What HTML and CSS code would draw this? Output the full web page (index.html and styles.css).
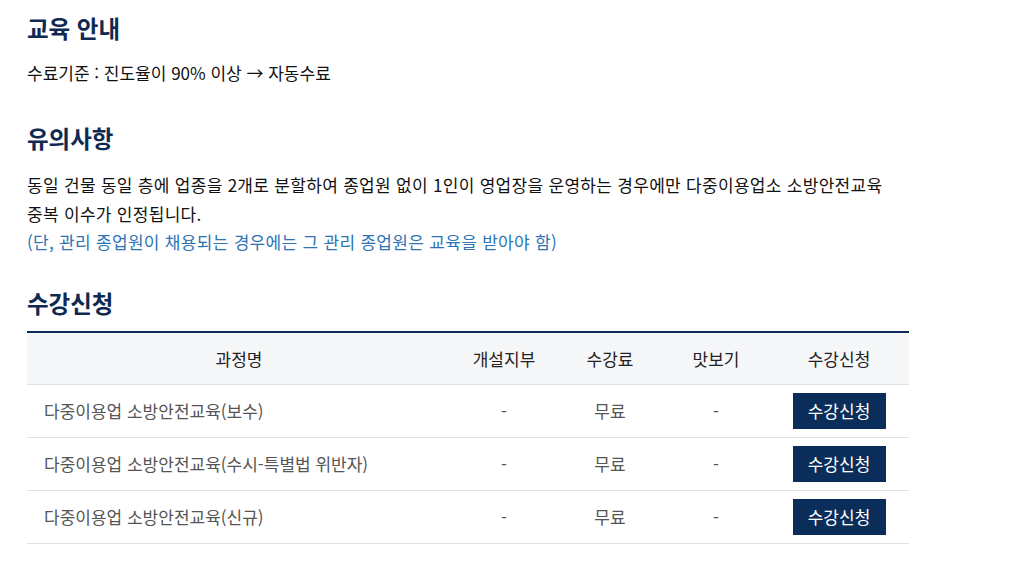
FILE: index.html
```html
<!DOCTYPE html>
<html lang="ko">
<head>
    <meta charset="UTF-8">
    <title>교육 안내</title>
    <link rel="stylesheet" href="styles.css">
</head>
<body>
    <div class="container">
        <h2 class="title first">교육 안내</h2>
        <p class="text">수료기준 : 진도율이 90% 이상 → 자동수료</p>

        <h2 class="title">유의사항</h2>
        <div class="notice">
            <p>동일 건물 동일 층에 업종을 2개로 분할하여 종업원 없이 1인이 영업장을 운영하는 경우에만 다중이용업소 소방안전교육 중복 이수가 인정됩니다.</p>
            <p class="blue">(단, 관리 종업원이 채용되는 경우에는 그 관리 종업원은 교육을 받아야 함)</p>
        </div>

        <h2 class="title">수강신청</h2>
        <table class="course-table">
            <colgroup>
                <col style="width:424px">
                <col style="width:106px">
                <col style="width:106px">
                <col style="width:106px">
                <col style="width:140px">
            </colgroup>
            <thead>
                <tr>
                    <th>과정명</th>
                    <th>개설지부</th>
                    <th>수강료</th>
                    <th>맛보기</th>
                    <th>수강신청</th>
                </tr>
            </thead>
            <tbody>
                <tr>
                    <td class="name">다중이용업 소방안전교육(보수)</td>
                    <td>-</td>
                    <td>무료</td>
                    <td>-</td>
                    <td><button type="button" class="btn">수강신청</button></td>
                </tr>
                <tr>
                    <td class="name">다중이용업 소방안전교육(수시-특별법 위반자)</td>
                    <td>-</td>
                    <td>무료</td>
                    <td>-</td>
                    <td><button type="button" class="btn">수강신청</button></td>
                </tr>
                <tr>
                    <td class="name">다중이용업 소방안전교육(신규)</td>
                    <td>-</td>
                    <td>무료</td>
                    <td>-</td>
                    <td><button type="button" class="btn">수강신청</button></td>
                </tr>
            </tbody>
        </table>
    </div>
</body>
</html>
```

FILE: styles.css
```css
body {
    margin: 0;
    font-family: "Noto Sans CJK KR", "Noto Sans", sans-serif;
    color: #111;
    background: #fff;
    word-break: keep-all;
}
.container {
    width: 882px;
    padding: 0 27px;
}
.title {
    font-size: 23.5px;
    font-weight: bold;
    color: #0e2a52;
    line-height: 30px;
    margin: 36px 0 0;
}
.title.first {
    margin-top: 13px;
}
.notice + .title {
    margin-top: 31px;
}
.text {
    font-size: 17px;
    line-height: 28px;
    margin: 16px 0 0;
}
.notice {
    margin-top: 18px;
    font-size: 17px;
    letter-spacing: 0.3px;
    line-height: 28.5px;
}
.notice p {
    margin: 0;
}
.notice .blue {
    color: #2c74b5;
}
.course-table {
    width: 882px;
    margin-top: 13px;
    border-collapse: collapse;
    table-layout: fixed;
    border-top: 2px solid #0b2d5a;
    font-size: 17px;
}
.course-table th {
    height: 51px;
    background: #f6f7f9;
    font-weight: normal;
    color: #222;
    border-bottom: 1px solid #e2e2e2;
    padding: 0;
}
.course-table td {
    height: 52px;
    text-align: center;
    color: #555;
    border-bottom: 1px solid #e2e2e2;
    padding: 0;
}
.course-table td.name {
    text-align: left;
    padding-left: 17px;
}
.btn {
    width: 93px;
    height: 36px;
    border: none;
    background: #0b2d5a;
    color: #fff;
    font-family: inherit;
    font-size: 17px;
    cursor: pointer;
}
```
